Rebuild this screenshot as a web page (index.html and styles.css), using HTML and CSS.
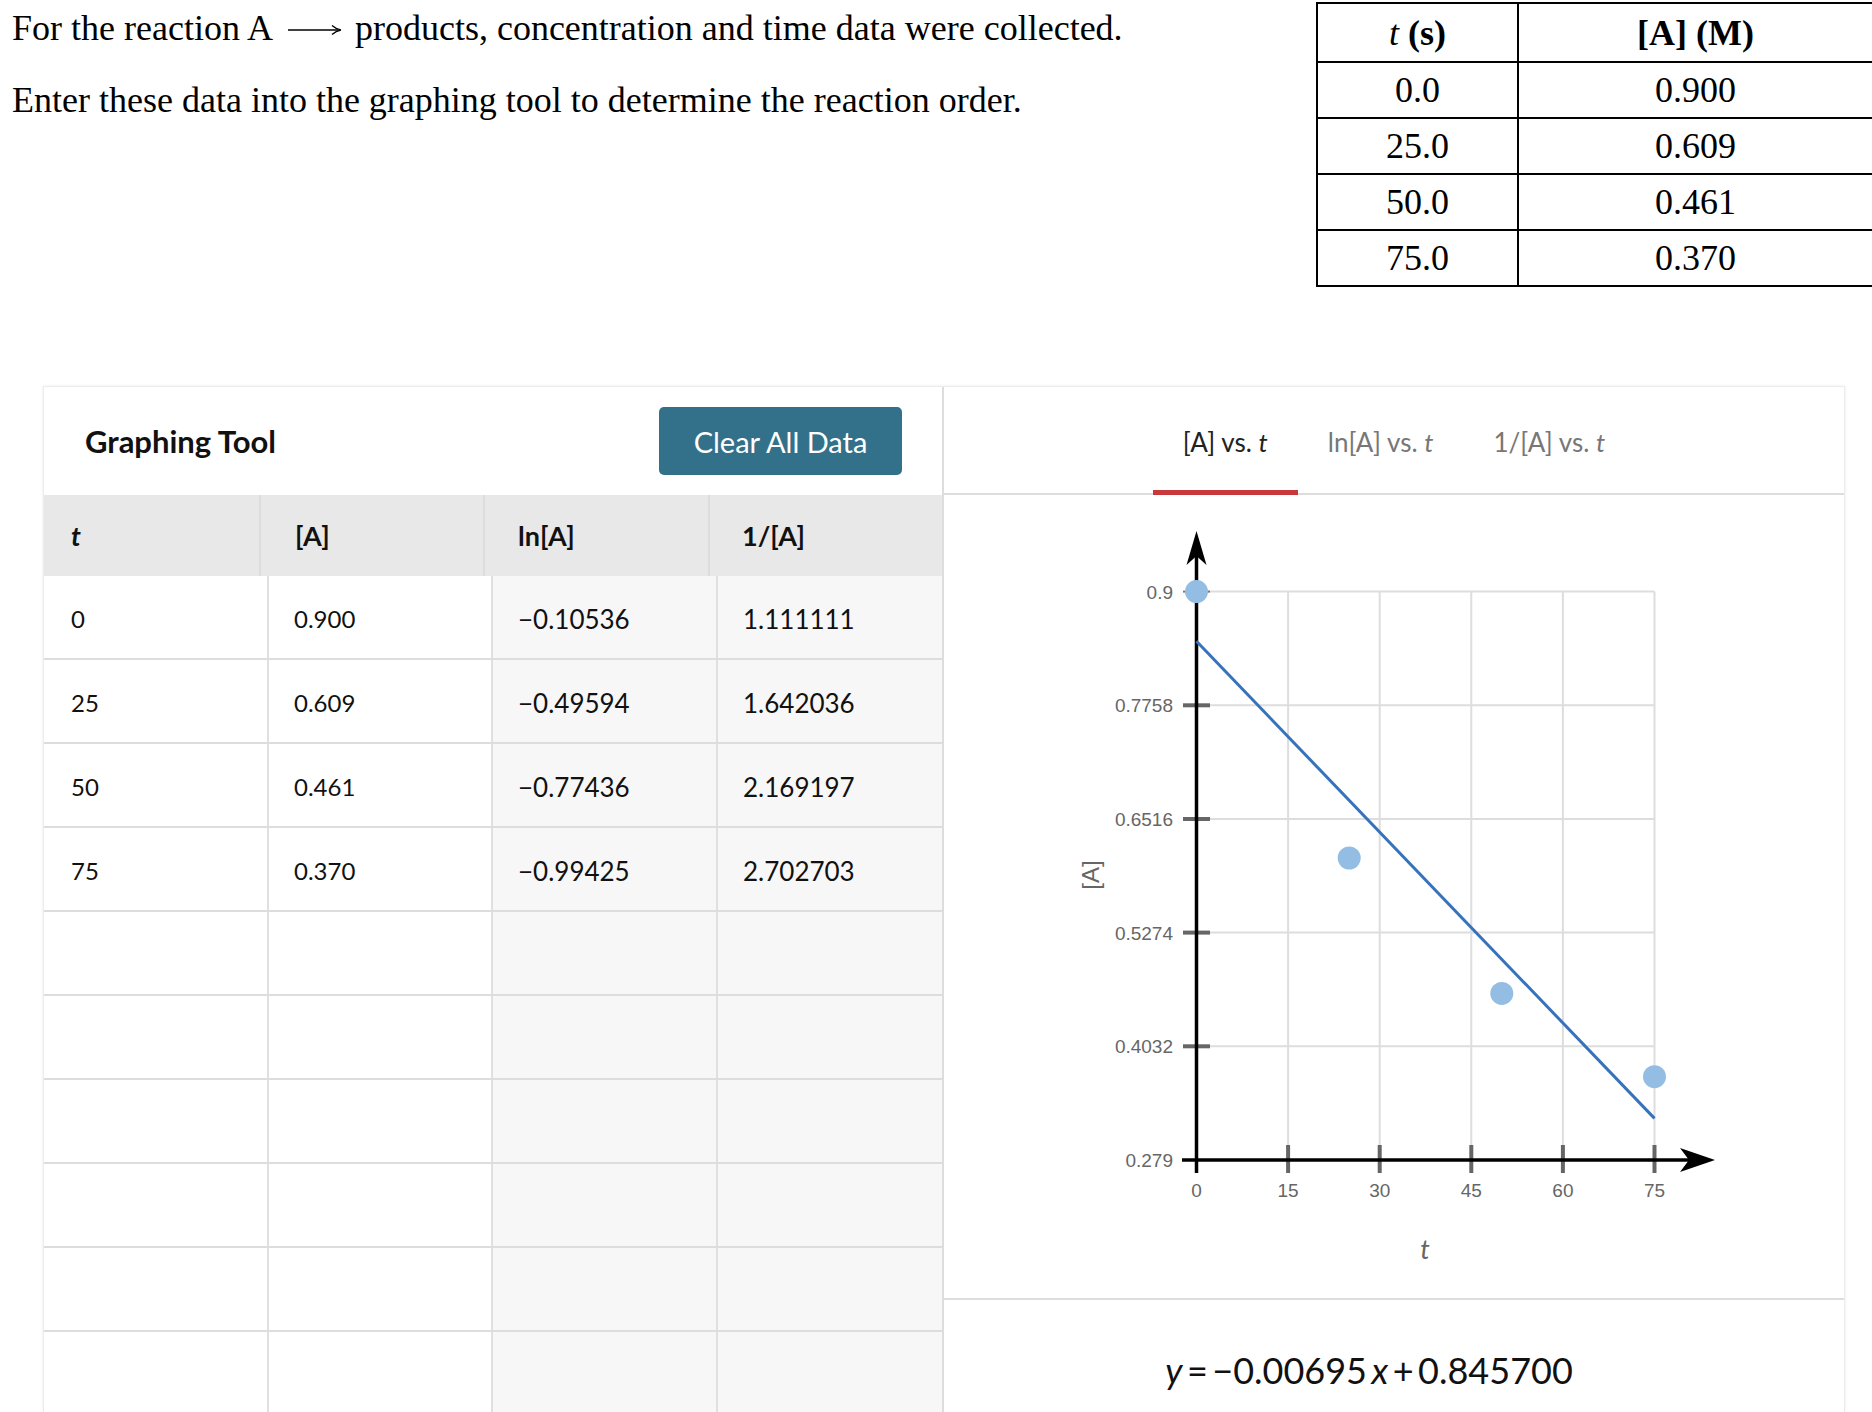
FILE: index.html
```html
<!DOCTYPE html>
<html lang="en">
<head>
<meta charset="utf-8">
<title>Graphing Tool</title>
<link rel="stylesheet" href="styles.css">
</head>
<body>
<div class="top">
  <div class="intro">
    <p>For the reaction A<svg class="rxn-arrow" width="53" height="14" viewBox="0 0 53 14"><line x1="0" y1="7" x2="50" y2="7" stroke="#000" stroke-width="1.6"/><path d="M44 2.5 Q48 6 53 7 Q48 8 44 11.5" fill="none" stroke="#000" stroke-width="1.4"/></svg>products, concentration and time data were collected.</p>
    <p>Enter these data into the graphing tool to determine the reaction order.</p>
  </div>
  <table class="data">
    <tr class="h"><th><i class="it">t</i> (s)</th><th>[A] (M)</th></tr>
    <tr><td>0.0</td><td>0.900</td></tr>
    <tr><td>25.0</td><td>0.609</td></tr>
    <tr><td>50.0</td><td>0.461</td></tr>
    <tr><td>75.0</td><td>0.370</td></tr>
  </table>
</div>

<div class="tool">
  <div class="left">
    <div class="left-head">
      <h2 class="title">Graphing Tool</h2>
      <button class="btn">Clear All Data</button>
    </div>
    <div class="thead">
      <div class="c1"><i>t</i></div>
      <div class="c2">[A]</div>
      <div class="c3">ln[A]</div>
      <div class="c4">1/[A]</div>
    </div>
    <div class="tbody">
      <div class="row"><div class="in">0</div><div class="in">0.900</div><div class="calc">−0.10536</div><div class="calc">1.111111</div></div>
      <div class="row"><div class="in">25</div><div class="in">0.609</div><div class="calc">−0.49594</div><div class="calc">1.642036</div></div>
      <div class="row"><div class="in">50</div><div class="in">0.461</div><div class="calc">−0.77436</div><div class="calc">2.169197</div></div>
      <div class="row"><div class="in">75</div><div class="in">0.370</div><div class="calc">−0.99425</div><div class="calc">2.702703</div></div>
      <div class="row"><div class="in"></div><div class="in"></div><div class="calc"></div><div class="calc"></div></div>
      <div class="row"><div class="in"></div><div class="in"></div><div class="calc"></div><div class="calc"></div></div>
      <div class="row"><div class="in"></div><div class="in"></div><div class="calc"></div><div class="calc"></div></div>
      <div class="row"><div class="in"></div><div class="in"></div><div class="calc"></div><div class="calc"></div></div>
      <div class="row"><div class="in"></div><div class="in"></div><div class="calc"></div><div class="calc"></div></div>
      <div class="row"><div class="in"></div><div class="in"></div><div class="calc"></div><div class="calc"></div></div>
    </div>
  </div>

  <div class="right">
    <div class="tabs">
      <div class="tab active">[A] vs.&nbsp;<i>t</i></div>
      <div class="tab">ln[A] vs.&nbsp;<i>t</i></div>
      <div class="tab">1/[A] vs.&nbsp;<i>t</i></div>
    </div>
    <div class="plot">
      <svg class="chart" width="900" height="803" viewBox="0 0 900 803">
        <g class="grid">
          <line x1="344.1" y1="96.6" x2="344.1" y2="665"/>
          <line x1="435.7" y1="96.6" x2="435.7" y2="665"/>
          <line x1="527.3" y1="96.6" x2="527.3" y2="665"/>
          <line x1="618.9" y1="96.6" x2="618.9" y2="665"/>
          <line x1="710.5" y1="96.6" x2="710.5" y2="665"/>
          <line x1="252.5" y1="96.6" x2="710.5" y2="96.6"/>
          <line x1="252.5" y1="210.3" x2="710.5" y2="210.3"/>
          <line x1="252.5" y1="324" x2="710.5" y2="324"/>
          <line x1="252.5" y1="437.6" x2="710.5" y2="437.6"/>
          <line x1="252.5" y1="551.3" x2="710.5" y2="551.3"/>
        </g>
        <g class="ticks">
          <line x1="239" y1="210.3" x2="266" y2="210.3"/>
          <line x1="239" y1="324" x2="266" y2="324"/>
          <line x1="239" y1="437.6" x2="266" y2="437.6"/>
          <line x1="239" y1="551.3" x2="266" y2="551.3"/>
          <line x1="344.1" y1="650" x2="344.1" y2="678"/>
          <line x1="435.7" y1="650" x2="435.7" y2="678"/>
          <line x1="527.3" y1="650" x2="527.3" y2="678"/>
          <line x1="618.9" y1="650" x2="618.9" y2="678"/>
          <line x1="710.5" y1="650" x2="710.5" y2="678"/>
        </g>
        <line class="tick-thin" x1="239" y1="96.6" x2="266" y2="96.6"/>
        <g class="axes">
          <line x1="252.5" y1="55" x2="252.5" y2="678"/>
          <line x1="238" y1="665" x2="755" y2="665"/>
        </g>
        <path class="head" d="M252.5 36 L262.5 70 L252.5 61 L242.5 70 Z"/>
        <path class="head" d="M771 665 L736 653 L745 665 L736 677 Z"/>
        <line class="fit" x1="252.5" y1="146.3" x2="710.5" y2="623.4"/>
        <g class="dots">
          <circle cx="252.5" cy="96.6" r="11.5"/>
          <circle cx="405.2" cy="363" r="11.5"/>
          <circle cx="557.8" cy="498.4" r="11.5"/>
          <circle cx="710.5" cy="581.7" r="11.5"/>
        </g>
        <g class="ylab">
          <text x="229" y="103.6">0.9</text>
          <text x="229" y="217.3">0.7758</text>
          <text x="229" y="331">0.6516</text>
          <text x="229" y="444.6">0.5274</text>
          <text x="229" y="558.3">0.4032</text>
          <text x="229" y="672">0.279</text>
        </g>
        <g class="xlab">
          <text x="252.5" y="701.5">0</text>
          <text x="344.1" y="701.5">15</text>
          <text x="435.7" y="701.5">30</text>
          <text x="527.3" y="701.5">45</text>
          <text x="618.9" y="701.5">60</text>
          <text x="710.5" y="701.5">75</text>
        </g>
        <text class="xtitle" x="481" y="764">t</text>
        <text class="ytitle" transform="translate(146 380) rotate(-90)">[A]</text>
      </svg>
    </div>
    <div class="equation"><i>y</i>&thinsp;=&thinsp;−0.00695&thinsp;<i>x</i>&thinsp;+&thinsp;0.845700</div>
  </div>
</div>
</body>
</html>
```

FILE: styles.css
```css
html {
  overflow: hidden;
}

body {
  margin: 0;
  background: #fff;
  color: #000;
  font-family: "Liberation Serif", "Times New Roman", serif;
}

.top {
  display: flex;
  justify-content: space-between;
  align-items: flex-start;
}

.intro {
  padding: 8px 0 0 12px;
  font-size: 36px;
}

.intro p {
  margin: 0 0 31px;
  line-height: 41px;
  white-space: nowrap;
}

.rxn-arrow {
  margin: 0 14px 0 15px;
  vertical-align: 3px;
}

.data {
  border-collapse: collapse;
  width: 558px;
  margin: 2px -2px 0 0;
  font-size: 36px;
}

.data th,
.data td {
  border: 2px solid #000;
  text-align: center;
  padding: 0;
}

.data th:first-child,
.data td:first-child {
  width: 199px;
}

.data tr {
  height: 56px;
}

.data tr.h {
  height: 59px;
}

.data .it {
  font-weight: 400;
}

/* Graphing tool */
.tool {
  display: flex;
  margin: 99px 0 0 43px;
  width: 1802px;
  box-sizing: border-box;
  border: 1px solid #ececec;
  box-shadow: 0 0 3px rgba(0, 0, 0, 0.08);
  font-family: Lato, "Open Sans", sans-serif;
  color: #222;
}

.left {
  width: 898px;
  flex: none;
  border-right: 2px solid #ddd;
}

.left-head {
  height: 108px;
  box-sizing: border-box;
  display: flex;
  align-items: center;
  justify-content: space-between;
  padding: 0 40px 0 41px;
}

.title {
  margin: 0;
  font-size: 31px;
  font-weight: 700;
  color: #111;
}

.btn {
  width: 243px;
  height: 68px;
  border: 0;
  border-radius: 5px;
  background: #33718a;
  color: #fff;
  font-family: Lato, sans-serif;
  font-size: 29px;
  padding: 0;
}

.thead {
  display: grid;
  grid-template-columns: 215px 224px 225px 1fr;
  height: 81px;
  background: #e8e8e8;
}

.thead > div {
  display: flex;
  align-items: center;
  font-size: 27px;
  font-weight: 700;
  color: #111;
}

.thead .c1 {
  padding-left: 27px;
}

.thead .c2 {
  padding-left: 34px;
  border-left: 2px solid #dcdcdc;
}

.thead .c3 {
  padding-left: 33px;
  border-left: 2px solid #dcdcdc;
}

.thead .c4 {
  padding-left: 32px;
  border-left: 2px solid #dcdcdc;
}

.row {
  display: grid;
  grid-template-columns: 223px 224px 225px 1fr;
  height: 84px;
  box-sizing: border-box;
  border-bottom: 2px solid #ddd;
}

.row > div {
  display: flex;
  align-items: center;
  padding: 3px 0 0 25px;
  border-left: 2px solid #e0e0e0;
  color: #111;
}

.row > div:first-child {
  border-left: 0;
  padding-left: 27px;
}

.row .in {
  background: #fff;
  font-size: 24px;
}

.row .calc {
  background: #f7f7f7;
  font-size: 26px;
}

.right {
  flex: 1;
  display: flex;
  flex-direction: column;
  min-width: 0;
}

.tabs {
  height: 108px;
  box-sizing: border-box;
  border-bottom: 2px solid #ddd;
  display: flex;
  justify-content: center;
}

.tab {
  display: flex;
  align-items: center;
  padding: 7px 30px 0;
  margin-bottom: -2px;
  border-bottom: 5px solid transparent;
  font-size: 26px;
  color: #777;
}

.tab.active {
  color: #222;
  border-bottom-color: #c9383a;
}

.plot {
  height: 803px;
}

.chart {
  display: block;
}

.grid line {
  stroke: #dddddd;
  stroke-width: 2;
}

.ticks line {
  stroke: #666;
  stroke-width: 4;
}

.tick-thin {
  stroke: #777;
  stroke-width: 2;
}

.axes line {
  stroke: #000;
  stroke-width: 3.5;
}

.head {
  fill: #000;
}

.fit {
  stroke: #3673bb;
  stroke-width: 3;
}

.dots circle {
  fill: #93bde3;
}

.ylab text,
.xlab text {
  font-family: "Liberation Sans", Arial, sans-serif;
  font-size: 19px;
  fill: #666;
}

.ylab text {
  text-anchor: end;
}

.xlab text {
  text-anchor: middle;
}

.xtitle {
  font-family: Lato, sans-serif;
  font-style: italic;
  font-size: 27px;
  fill: #666;
  text-anchor: middle;
}

.ytitle {
  font-family: "Liberation Sans", Arial, sans-serif;
  font-size: 24px;
  fill: #666;
  text-anchor: middle;
  dominant-baseline: central;
}

.equation {
  flex: 1;
  border-top: 2px solid #ddd;
  padding: 48px 50px 0 0;
  text-align: center;
  font-size: 36px;
  color: #111;
}
```
